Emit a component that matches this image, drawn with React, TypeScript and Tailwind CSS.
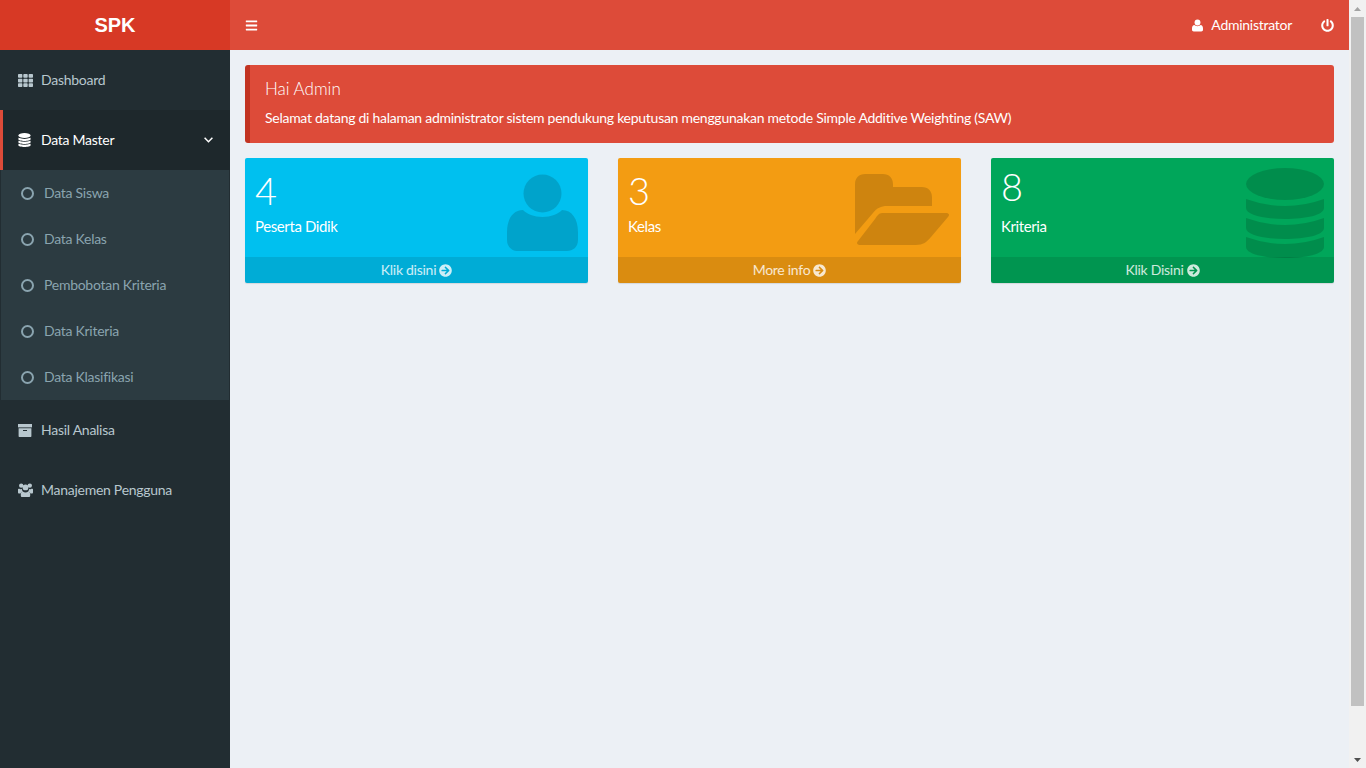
import type { ReactNode } from "react";
import { FaArrowCircleRight, FaBars, FaPowerOff, FaTh } from "react-icons/fa";

const userHead = { cx: 35.5, cy: 19.5, r: 19 };
const userBody = "M16 36C20 40 27 43 35.5 43C44 43 51 40 55 36C65 36 71 45 71 58V66C71 73 66 77 60 77H11C5 77 0 73 0 66V58C0 45 6 36 16 36Z";

function UserIcon({ className }: { className: string }) {
  return (
    <svg viewBox="0 0 71 77" className={className} fill="currentColor">
      <circle {...userHead} />
      <path d={userBody} />
    </svg>
  );
}

function DatabaseIcon({ className }: { className: string }) {
  return (
    <svg viewBox="0 0 78 90" className={className} fill="currentColor">
      <ellipse cx="39" cy="16" rx="39" ry="16" />
      <path d="M0 31Q39 45 78 31V40C78 47 60 51 39 51C18 51 0 47 0 40Z" />
      <path d="M0 50Q39 64 78 50V60C78 67 60 71 39 71C18 71 0 67 0 60Z" />
      <path d="M0 69Q39 83 78 69V79C78 86 60 90 39 90C18 90 0 86 0 79Z" />
    </svg>
  );
}

function UsersIcon() {
  return (
    <svg viewBox="0 0 15 14" className="h-[14px] w-[15px]" fill="currentColor">
      <circle cx="3.2" cy="2.6" r="2.2" />
      <circle cx="11.8" cy="2.6" r="2.2" />
      <circle cx="7.5" cy="4.4" r="2.9" />
      <path d="M0 6.2C0.6 5.6 1.4 5.6 2 6C2.8 6.3 3.4 6.3 4 6.1C4 7.4 4.4 8.2 5 8.8C3.8 9 3 9.6 2.6 10.4H0.8C0.3 10.4 0 10 0 9.5Z" />
      <path d="M15 6.2C14.4 5.6 13.6 5.6 13 6C12.2 6.3 11.6 6.3 11 6.1C11 7.4 10.6 8.2 10 8.8C11.2 9 12 9.6 12.4 10.4H14.2C14.7 10.4 15 10 15 9.5Z" />
      <path d="M4.8 8.4C5.6 9.2 6.5 9.5 7.5 9.5C8.5 9.5 9.4 9.2 10.2 8.4C11.6 8.4 12.2 9.8 12.2 11.6V12.4C12.2 13.3 11.6 14 10.8 14H4.2C3.4 14 2.8 13.3 2.8 12.4V11.6C2.8 9.8 3.4 8.4 4.8 8.4Z" />
    </svg>
  );
}

function ArchiveIcon() {
  return (
    <svg viewBox="0 0 14 13" className="h-[13px] w-[14px]" fill="currentColor">
      <rect x="0" y="0" width="14" height="3.4" />
      <path d="M0.6 4.2H13.4V12.2C13.4 12.6 13.1 13 12.7 13H1.3C0.9 13 0.6 12.6 0.6 12.2ZM5 6V7H9V6Z" fillRule="evenodd" />
    </svg>
  );
}

function AngleDown() {
  return (
    <svg viewBox="0 0 9 6" className="h-[6px] w-[9px]" fill="none" stroke="currentColor" strokeWidth="1.5">
      <path d="M0.6 0.8L4.5 4.7L8.4 0.8" />
    </svg>
  );
}

function SideItem({ icon, label, active, right }: { icon: ReactNode; label: string; active?: boolean; right?: ReactNode }) {
  return (
    <div
      className={
        active
          ? "flex h-[60px] items-center border-l-[3px] border-[#dd4b39] bg-[#1e282c] pl-[15px] pr-[17px] text-white"
          : "flex h-[60px] items-center pl-[18px] pr-[17px] text-[#b8c7ce]"
      }
    >
      <span className="flex w-[23px] shrink-0 items-center">{icon}</span>
      <span className="flex-1 pb-[2px] tracking-[-0.27px]">{label}</span>
      {right}
    </div>
  );
}

function SubItem({ label }: { label: string }) {
  return (
    <div className="flex h-[46px] items-center pl-[20px] text-[#8aa4af]">
      <span className="size-[13px] shrink-0 rounded-full border-2 border-[#8aa4af]" />
      <span className="ml-[10px] pb-[2px] tracking-[-0.27px]">{label}</span>
    </div>
  );
}

function StatBox({
  value,
  label,
  link,
  color,
  numberClass,
  icon,
}: {
  value: string;
  label: string;
  link: string;
  color: string;
  numberClass: string;
  icon: ReactNode;
}) {
  return (
    <div className={`relative flex h-[125px] flex-col overflow-hidden rounded-[2px] text-white shadow-[0_1px_1px_rgba(0,0,0,0.1)] ${color}`}>
      <div className="flex-1 p-[10px]">
        <div className={`text-[38px] font-light leading-[38px] ${numberClass}`}>{value}</div>
        <p className="text-[15px] leading-[18px] tracking-[-0.4px]">{label}</p>
      </div>
      {icon}
      <div className="flex h-[26px] items-center justify-center gap-[3px] bg-black/10 text-white/80">
        <span className="pb-[2px] tracking-[-0.27px]">{link}</span>
        <FaArrowCircleRight className="size-[13px]" />
      </div>
    </div>
  );
}

export default function App() {
  return (
    <div className="flex h-screen w-screen overflow-hidden bg-[#ecf0f5] font-['Lato','Open_Sans',sans-serif] text-[14px]">
      <div className="flex min-w-0 flex-1">
        <aside className="flex w-[230px] shrink-0 flex-col bg-[#222d32]">
          <div className="flex h-[50px] items-center justify-center bg-[#d73925] font-['Liberation_Sans',sans-serif] text-[20px] font-bold text-white">
            SPK
          </div>
          <SideItem icon={<FaTh className="size-[15px]" />} label="Dashboard" />
          <SideItem
            active
            icon={<DatabaseIcon className="h-[14px] w-[13px]" />}
            label="Data Master"
            right={<AngleDown />}
          />
          <div className="mx-px bg-[#2c3b41]">
            <SubItem label="Data Siswa" />
            <SubItem label="Data Kelas" />
            <SubItem label="Pembobotan Kriteria" />
            <SubItem label="Data Kriteria" />
            <SubItem label="Data Klasifikasi" />
          </div>
          <SideItem icon={<ArchiveIcon />} label="Hasil Analisa" />
          <SideItem icon={<UsersIcon />} label="Manajemen Pengguna" />
        </aside>

        <div className="flex min-w-0 flex-1 flex-col">
          <header className="flex h-[50px] items-center bg-[#dd4b39] pl-[15px] pr-[15px] text-white">
            <FaBars className="size-[13px]" />
            <div className="ml-auto flex items-center">
              <UserIcon className="h-[13px] w-[11px]" />
              <span className="ml-[8px] pb-[2px] tracking-[-0.27px]">Administrator</span>
              <FaPowerOff className="ml-[29px] size-[13px]" />
            </div>
          </header>

          <main className="flex flex-col gap-[15px] p-[15px]">
            <div className="h-[78px] rounded-[3px] border-l-[5px] border-[#c23321] bg-[#dd4b39] pl-[15px] pr-[15px] text-white">
              <h4 className="pt-[13px] text-[17px] font-light leading-[22px]">Hai Admin</h4>
              <p className="pt-[8px] leading-[20px] tracking-[-0.27px]">
                Selamat datang di halaman administrator sistem pendukung keputusan menggunakan metode Simple Additive Weighting (SAW)
              </p>
            </div>

            <div className="grid grid-cols-3 gap-[30px]">
              <StatBox
                value="4"
                label="Peserta Didik"
                link="Klik disini"
                color="bg-[#00c0ef]"
                numberClass="h-[49px] pt-[3px]"
                icon={<UserIcon className="absolute right-[10px] top-[16px] h-[77px] w-[71px] text-black/15" />}
              />
              <StatBox
                value="3"
                label="Kelas"
                link="More info"
                color="bg-[#f39c12]"
                numberClass="h-[49px] pt-[3px]"
                icon={
                  <svg viewBox="0 0 94 71" className="absolute right-[12px] top-[16px] h-[71px] w-[94px] text-black/15" fill="currentColor">
                    <path d="M0 10C0 4 4 0 10 0H28C34 0 38 4 38 10V13H67C73 13 77 17 77 23V32H32C26 32 22 34 18 39L0 60Z" />
                    <path d="M27 39H91C94 39 95 41 93 43L76 63C72 68 68 71 61 71H6C2 71 1 69 3 67L20 45C22 42 24 39 27 39Z" />
                  </svg>
                }
              />
              <StatBox
                value="8"
                label="Kriteria"
                link="Klik Disini"
                color="bg-[#00a65a]"
                numberClass="h-[49px] -mt-[1px] mb-[1px]"
                icon={<DatabaseIcon className="absolute right-[10px] top-[10px] h-[90px] w-[78px] text-black/15" />}
              />
            </div>
          </main>
        </div>
      </div>

      <div className="flex w-[17px] shrink-0 flex-col items-center bg-[#f1f1f1]">
        <div className="flex h-[17px] w-full items-center justify-center">
          <svg viewBox="0 0 7 4" className="h-[4px] w-[7px] fill-[#a3a3a3]">
            <path d="M3.5 0L7 4H0Z" />
          </svg>
        </div>
        <div className="h-[689px] w-[13px] bg-[#c1c1c1]" />
        <div className="mt-auto flex h-[17px] w-full items-center justify-center">
          <svg viewBox="0 0 7 4" className="h-[4px] w-[7px] fill-[#505050]">
            <path d="M0 0H7L3.5 4Z" />
          </svg>
        </div>
      </div>
    </div>
  );
}
